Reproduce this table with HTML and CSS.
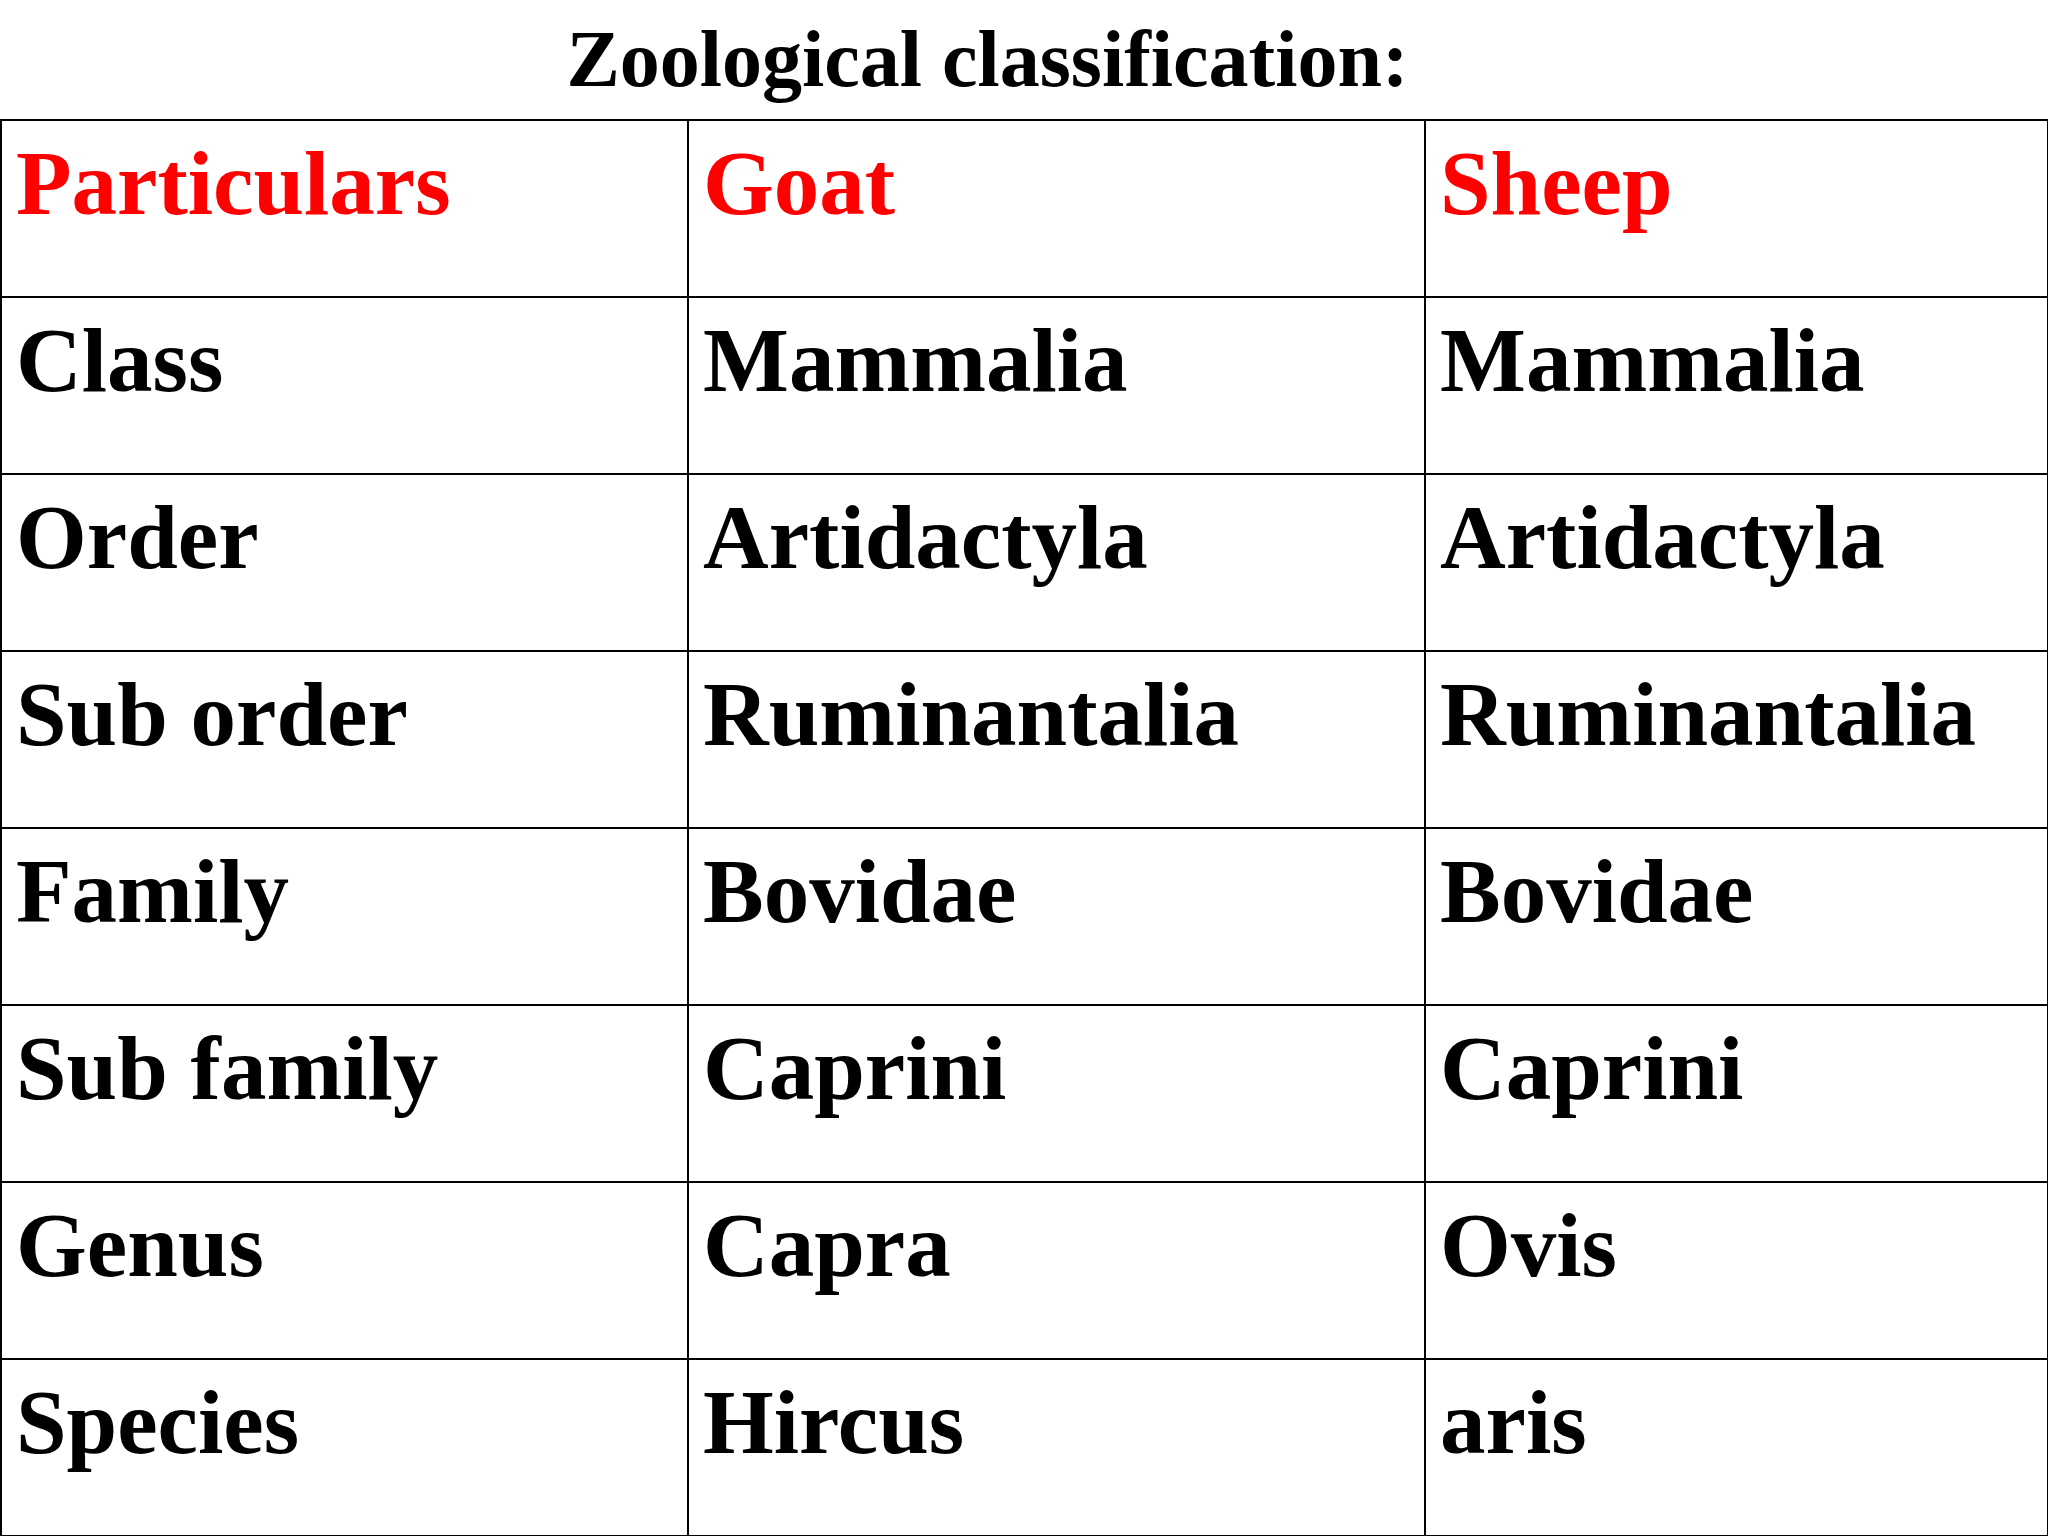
FILE: index.html
```html
<!DOCTYPE html>
<html>
<head>
<meta charset="utf-8">
<link rel="stylesheet" href="styles.css">
</head>
<body>
<div class="title">Zoological classification:</div>
<table class="grid">
<colgroup><col class="c1"><col class="c2"><col class="c3"></colgroup>
<tr class="head"><td>Particulars</td><td>Goat</td><td>Sheep</td></tr>
<tr><td>Class</td><td>Mammalia</td><td>Mammalia</td></tr>
<tr><td>Order</td><td>Artidactyla</td><td>Artidactyla</td></tr>
<tr><td>Sub order</td><td>Ruminantalia</td><td>Ruminantalia</td></tr>
<tr><td>Family</td><td>Bovidae</td><td>Bovidae</td></tr>
<tr><td>Sub family</td><td>Caprini</td><td>Caprini</td></tr>
<tr><td>Genus</td><td>Capra</td><td>Ovis</td></tr>
<tr><td>Species</td><td>Hircus</td><td>aris</td></tr>
</table>
</body>
</html>
```
FILE: styles.css
```css
html, body {
  margin: 0;
  padding: 0;
  background: #ffffff;
}
body {
  font-family: "Liberation Serif", "Times New Roman", serif;
  font-weight: bold;
  color: #000000;
  width: 2048px;
  overflow: hidden;
}
.title {
  font-size: 80px;
  line-height: 80px;
  padding: 19px 73px 20px 0;
  text-align: center;
  white-space: nowrap;
}
.grid {
  border-collapse: collapse;
  table-layout: fixed;
  width: 2047px;
}
.c1 { width: 687px; }
.c2 { width: 737px; }
.c3 { width: 623px; }
.grid td {
  border: 2px solid #000000;
  font-size: 91px;
  line-height: 91px;
  padding: 17px 0 67px 14px;
  vertical-align: top;
  white-space: nowrap;
}
.head td {
  color: #ff0000;
}
```
